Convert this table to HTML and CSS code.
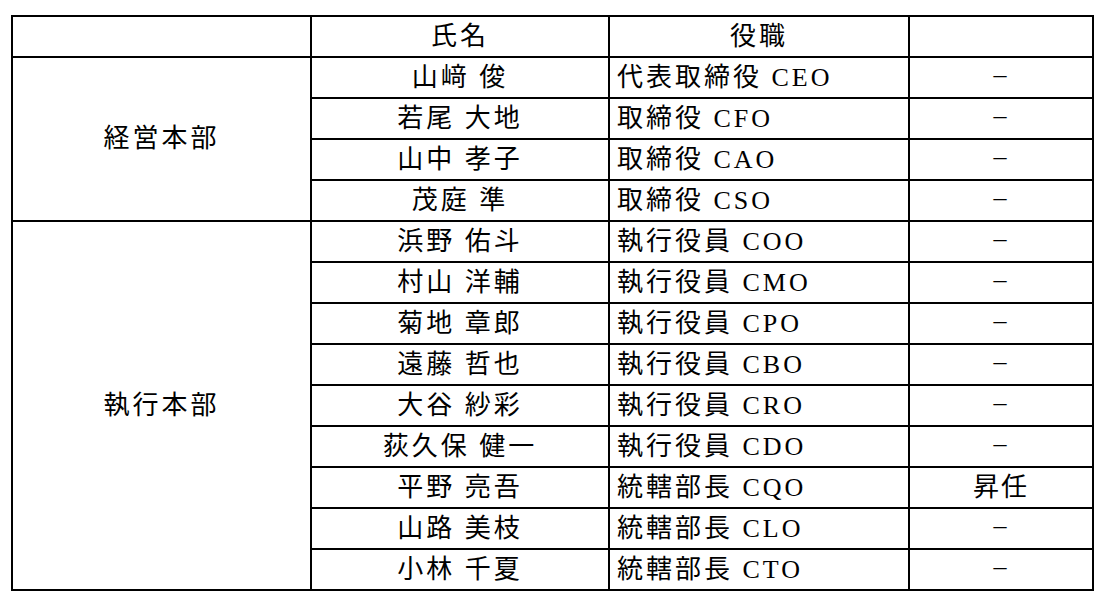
FILE: index.html
```html
<!DOCTYPE html>
<html lang="ja">
<head>
<meta charset="utf-8">
<title>役員一覧</title>
<link rel="stylesheet" href="styles.css">
</head>
<body>
<table class="roster">
  <colgroup>
    <col class="c-dept">
    <col class="c-name">
    <col class="c-role">
    <col class="c-note">
  </colgroup>
  <thead>
    <tr><th></th><th>氏名</th><th>役職</th><th></th></tr>
  </thead>
  <tbody>
    <tr><td class="dept" rowspan="4">経営本部</td><td class="name">山﨑 俊</td><td class="role">代表取締役 CEO</td><td class="note dash">–</td></tr>
    <tr><td class="name">若尾 大地</td><td class="role">取締役 CFO</td><td class="note dash">–</td></tr>
    <tr><td class="name">山中 孝子</td><td class="role">取締役 CAO</td><td class="note dash">–</td></tr>
    <tr><td class="name">茂庭 準</td><td class="role">取締役 CSO</td><td class="note dash">–</td></tr>
    <tr><td class="dept" rowspan="9">執行本部</td><td class="name">浜野 佑斗</td><td class="role">執行役員 COO</td><td class="note dash">–</td></tr>
    <tr><td class="name">村山 洋輔</td><td class="role">執行役員 CMO</td><td class="note dash">–</td></tr>
    <tr><td class="name">菊地 章郎</td><td class="role">執行役員 CPO</td><td class="note dash">–</td></tr>
    <tr><td class="name">遠藤 哲也</td><td class="role">執行役員 CBO</td><td class="note dash">–</td></tr>
    <tr><td class="name">大谷 紗彩</td><td class="role">執行役員 CRO</td><td class="note dash">–</td></tr>
    <tr><td class="name">荻久保 健一</td><td class="role">執行役員 CDO</td><td class="note dash">–</td></tr>
    <tr><td class="name">平野 亮吾</td><td class="role">統轄部長 CQO</td><td class="note">昇任</td></tr>
    <tr><td class="name">山路 美枝</td><td class="role">統轄部長 CLO</td><td class="note dash">–</td></tr>
    <tr><td class="name">小林 千夏</td><td class="role">統轄部長 CTO</td><td class="note dash">–</td></tr>
  </tbody>
</table>
</body>
</html>
```

FILE: styles.css
```css
html, body {
  margin: 0;
  padding: 0;
  background: #fff;
}

body {
  font-family: "Liberation Serif", "Noto Sans CJK JP", serif;
  color: #000;
}

.roster {
  margin: 15px 0 0 11px;
  width: 1081px;
  border-collapse: collapse;
  table-layout: fixed;
  font-size: 26px;
  letter-spacing: 3px;
}

.c-dept { width: 299px; }
.c-name { width: 298px; }
.c-role { width: 300px; }
.c-note { width: 184px; }

.roster th,
.roster td {
  border: 2px solid #000;
  height: 39px;
  padding: 0;
  font-weight: normal;
  text-align: center;
  vertical-align: middle;
  line-height: 1;
  white-space: nowrap;
}

.roster td.role {
  text-align: left;
  padding-left: 7px;
}

.roster td.note {
  letter-spacing: 2px;
}

.roster td.dash {
  padding-bottom: 5px;
  height: 34px;
}
```
